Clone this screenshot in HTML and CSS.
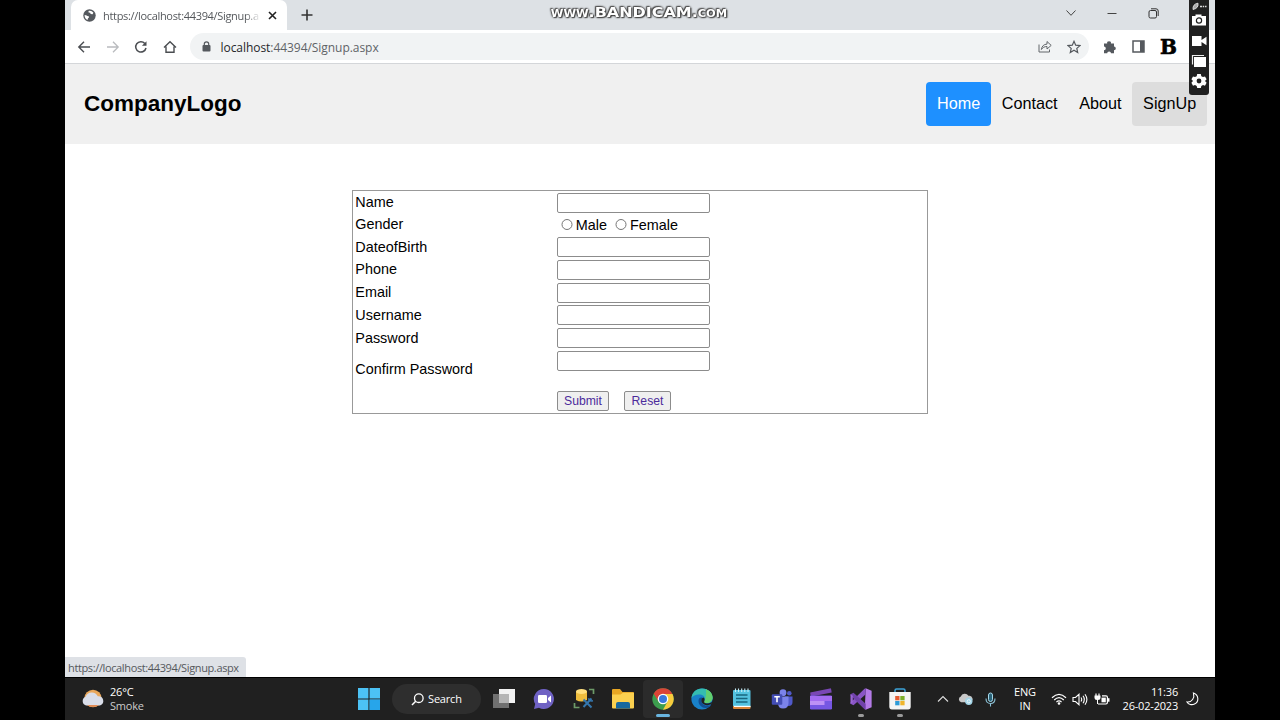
FILE: index.html
```html
<!DOCTYPE html>
<html>
<head>
    <meta charset="utf-8">
    <title>Signup</title>
    <link rel="stylesheet" href="styles.css">
</head>
<body>
<div class="screen">

    <!-- Tabs -->
    <div class="tab-bar">
        <div class="tab">
            <svg class="globe" width="13" height="13" viewBox="0 0 13 13"><circle cx="6.5" cy="6.5" r="6.2" fill="#55595e"/><path d="M1.6 6 C3.2 5.8 3.8 7.2 5.5 7.2 C6.8 7.8 5.6 8.8 5 9.3 L4.5 11 C2.8 10.2 1.5 8.6 1.6 6Z M5.5 2 C7.3 1.4 9.2 2 10.4 3.8 L9.6 5.2 L7.6 5 L7.2 3.8 L5.6 3.6Z" fill="#fff"/></svg>
            <span class="tab-title">https://localhost:44394/Signup.a</span>
            <svg class="tab-close" width="9" height="9" viewBox="0 0 9 9"><path d="M1 1 L8 8 M8 1 L1 8" stroke="#222" stroke-width="1.6"/></svg>
        </div>
        <svg class="new-tab" width="12" height="12" viewBox="0 0 12 12"><path d="M6 .5 V11.5 M.5 6 H11.5" stroke="#333" stroke-width="1.6"/></svg>
        <div class="window-buttons">
            <svg width="10" height="10" viewBox="0 0 10 10"><path d="M.5 2.5 L5 7.3 L9.5 2.5" fill="none" stroke="#444"/></svg>
            <svg width="10" height="10" viewBox="0 0 10 10"><path d="M.5 5.5 H9.5" stroke="#444"/></svg>
            <svg width="11" height="11" viewBox="0 0 11 11"><rect x="1" y="2.5" width="7.5" height="7.5" rx="1.5" fill="none" stroke="#333"/><path d="M3 .8 H8 Q10.2 .8 10.2 3 V8" fill="none" stroke="#333"/></svg>
        </div>
    </div>

    <!-- Toolbar -->
    <div class="toolbar">
        <div class="nav-buttons">
            <svg width="14" height="14" viewBox="0 0 14 14"><path d="M13 7 H1.8 M7 1.8 L1.8 7 L7 12.2" fill="none" stroke="#4a4d51" stroke-width="1.4"/></svg>
            <svg width="14" height="14" viewBox="0 0 14 14"><path d="M1 7 H12.2 M7 1.8 L12.2 7 L7 12.2" fill="none" stroke="#b9bbbe" stroke-width="1.3"/></svg>
            <svg width="14" height="14" viewBox="0 0 14 14"><path d="M12 8 A5.2 5.2 0 1 1 10.8 3.4" fill="none" stroke="#4a4d51" stroke-width="1.5"/><path d="M12.5 1.2 V5.8 H7.9Z" fill="#4a4d51"/></svg>
            <svg width="14" height="14" viewBox="0 0 14 14"><path d="M1 7.5 L7 1.8 L13 7.5 M3 6.4 V12.2 H11 V6.4" fill="none" stroke="#4a4d51" stroke-width="1.4"/></svg>
        </div>
        <div class="address">
            <svg width="9" height="11" viewBox="0 0 9 11"><rect x=".5" y="4" width="8" height="6.6" rx="1" fill="#55595e"/><path d="M2.3 4.5 V3 A2.2 2.2 0 0 1 6.7 3 V4.5" fill="none" stroke="#55595e" stroke-width="1.2"/></svg>
            <span class="url"><b>localhost</b>:44394/Signup.aspx</span>
            <svg class="share" width="14" height="13" viewBox="0 0 14 13"><path d="M1 4.5 V12 H11.5 V9.5" fill="none" stroke="#63676b"/><path d="M3.4 9.5 C3.8 6.2 5.8 4.2 9 4.1 V1.5 L13.2 5.4 L9 9 V6.5 C6.5 6.5 4.7 7.4 3.4 9.5Z" fill="none" stroke="#63676b"/></svg>
            <svg width="14" height="14" viewBox="0 0 14 14"><path d="M7 1.3 L8.7 5.2 L13 5.6 L9.8 8.4 L10.7 12.5 L7 10.3 L3.3 12.5 L4.2 8.4 L1 5.6 L5.3 5.2Z" fill="none" stroke="#55595e" stroke-width="1.2"/></svg>
        </div>
        <svg class="puzzle" width="14" height="14" viewBox="0 0 14 14"><path d="M1 3.5 H4.2 A1.9 1.9 0 1 1 7.9 3.5 H11 V6.6 A1.8 1.8 0 1 1 11 10.2 V13.3 H8 A1.9 1.9 0 0 0 4.2 13.3 H1 V10.2 A1.8 1.8 0 0 0 1 6.6Z" fill="#55595e"/></svg>
        <svg class="panel" width="13" height="13" viewBox="0 0 13 13"><rect x="1" y="1" width="11" height="11" fill="none" stroke="#55595e" stroke-width="1.5"/><rect x="8" y="1" width="4" height="11" fill="#55595e"/></svg>
        <span class="profile">B</span>
    </div>

    <!-- Page -->
    <div class="header">
        <span class="logo">CompanyLogo</span>
        <div class="header-right">
            <a class="active">Home</a>
            <a>Contact</a>
            <a>About</a>
            <a class="hover">SignUp</a>
        </div>
    </div>

    <div class="page">
        <form class="signup">
            <div class="row"><label>Name</label><input type="text"></div>
            <div class="row gender"><label>Gender</label>
                <span class="radios"><input type="radio" name="g">Male<input type="radio" name="g" class="second">Female</span>
            </div>
            <div class="row"><label>DateofBirth</label><input type="text"></div>
            <div class="row"><label>Phone</label><input type="text"></div>
            <div class="row"><label>Email</label><input type="text"></div>
            <div class="row"><label>Username</label><input type="text"></div>
            <div class="row"><label>Password</label><input type="password"></div>
            <div class="row confirm"><label>Confirm Password</label><input type="password"></div>
            <div class="row"><label></label><button type="button" class="submit">Submit</button><button type="button" class="reset">Reset</button></div>
        </form>
        <div class="status">https://localhost:44394/Signup.aspx</div>
    </div>

    <!-- Taskbar -->
    <div class="taskbar">
        <div class="weather">
            <svg width="24" height="22" viewBox="0 0 24 22"><circle cx="12" cy="10.5" r="8.7" fill="#e9a75a"/><path d="M5 17.5 A4.6 4.6 0 0 1 4.6 8.8 A6.6 6.6 0 0 1 16.8 8.2 A4.8 4.8 0 0 1 19 17.5Z" fill="#d9dde8"/><path d="M6 17 H18 Q12 21 6 17Z" fill="#e08a55"/></svg>
            <div>26°C<br><span>Smoke</span></div>
        </div>

        <div class="apps">
            <div class="app"><svg width="22" height="22" viewBox="0 0 22 22"><path d="M0 0 H10.4 V10.4 H0Z M11.6 0 H22 V10.4 H11.6Z M0 11.6 H10.4 V22 H0Z M11.6 11.6 H22 V22 H11.6Z" fill="#4cc2f5"/><path d="M11.6 11.6 H22 V22 H11.6Z" fill="#27a5ea"/></svg></div>
            <div class="search">
                <svg width="13" height="13" viewBox="0 0 13 13"><circle cx="7.8" cy="5.2" r="4.3" fill="none" stroke="#fff" stroke-width="1.3"/><path d="M4.7 8.3 L1 12" stroke="#fff" stroke-width="1.5"/></svg>
                Search
            </div>
            <!-- task view -->
            <div class="app"><svg width="22" height="22" viewBox="0 0 22 22"><rect x="6" y="1" width="16" height="14" fill="#f2f2f2"/><rect x="0" y="6" width="16" height="14" fill="#707070"/><rect x="6" y="6" width="10" height="9" fill="#b5b5b5"/></svg></div>
            <!-- chat -->
            <div class="app"><svg width="22" height="22" viewBox="0 0 22 22"><path d="M11 1 A10 10 0 1 1 6 19.7 L1 21 L2.2 16 A10 10 0 0 1 11 1Z" fill="#6f62c4"/><rect x="5" y="7" width="9" height="8" rx="1.3" fill="#fff"/><path d="M15 10 L18 7.6 V14.4 L15 12Z" fill="#fff"/></svg></div>
            <!-- database tools -->
            <div class="app"><svg width="22" height="22" viewBox="0 0 22 22"><path d="M3 3.5 V12 Q8.5 15 14 12 V3.5Z" fill="#eebd3d"/><ellipse cx="8.5" cy="3.5" rx="5.5" ry="2.5" fill="#ffdf7e"/><path d="M16 1.5 H20.5 V6 M1.5 15 V19.5 H6.5" fill="none" stroke="#6d9a68" stroke-width="1.7"/><path d="M10.5 11.5 L18.5 19.5 M18.5 10.5 L10.5 19" stroke="#3577ae" stroke-width="2"/><path d="M15.5 10.2 Q16.5 13.5 20 12.8" fill="none" stroke="#3577ae" stroke-width="1.5"/></svg></div>
            <!-- explorer -->
            <div class="app"><svg width="22" height="22" viewBox="0 0 22 22"><path d="M0 2 Q0 1 1 1 H8 L10.5 4 H21 Q22 4 22 5 V9 H0Z" fill="#e7a623"/><path d="M0 6.5 H8.5 L11 4.8 H22 V19.5 Q22 20.5 21 20.5 H1 Q0 20.5 0 19.5Z" fill="#fbd04f"/><path d="M4 20.5 V16 Q4 14 6 14 H16 Q18 14 18 16 V20.5Z" fill="#17689f"/></svg></div>
            <!-- chrome -->
            <div class="app open"><svg width="22" height="22" viewBox="0 0 22 22"><circle cx="11" cy="11" r="10.7" fill="#3c9d4e"/><path d="M11 11 L1.7 5.7 A10.7 10.7 0 0 1 20.3 5.7Z" fill="#db4437"/><path d="M11 6 H20.5 A10.7 10.7 0 0 1 11 21.7 L15.5 13.5Z" fill="#f8cb3d"/><path d="M1.7 5.7 L6.5 13.6 L11 6Z" fill="#db4437"/><circle cx="11" cy="11" r="5.3" fill="#fff"/><circle cx="11" cy="11" r="4" fill="#3978dc"/></svg></div>
            <!-- edge -->
            <div class="app"><svg width="22" height="22" viewBox="0 0 22 22"><circle cx="11" cy="11" r="10.6" fill="#1981c9"/><path d="M.5 10 C1.2 4 5.5 .4 11 .4 C17.5 .4 21.6 5 21.6 9.5 C21.6 13 19 15 15.8 15 C12.8 15 12.6 13.7 13.6 12.4 C14.6 9.5 12.5 7 9.3 6.6 C5.5 6.2 2 7.5 .5 10Z" fill="#35bdb0"/><path d="M15 1.3 C19 2.8 21.6 6 21.6 9.5 C21.6 13 19 15 15.8 15 C12.8 15 12.6 13.7 13.6 12.4 C15.5 8.5 15 4 15 1.3Z" fill="#62cf6e"/><path d="M7.7 11.5 C6.6 15.5 10 19.8 14.5 20 C17.2 20 19 18.8 20.3 16.7 C17 18.5 11.3 17.6 10.4 13.4 C10.2 11.6 11 10.6 11.6 10 C10 9 8.2 9.8 7.7 11.5Z" fill="#124f94"/><path d="M10.4 13.4 C10.1 11.5 11 9.6 12.6 9.4 C13.8 10.5 13.8 11.8 13.4 12.8 C12.4 14.6 13.8 15.4 16 15.4 C19 15.4 20.5 14.5 21.4 13.2 L20.6 16 C17 18 12 17.5 10.4 13.4Z" fill="#202020"/></svg></div>
            <!-- notepad -->
            <div class="app"><svg width="22" height="22" viewBox="0 0 22 22"><rect x="2" y="2" width="17.5" height="18" rx="1" fill="#54c2df"/><path d="M2 18 H19.5 V20 Q19.5 21 18.5 21 H3 Q2 21 2 20Z" fill="#d98437"/><path d="M3 17.8 H19.5 V19 H3Z" fill="#fff"/><path d="M5 7 H16.5 M5 10.5 H16.5 M5 14 H16.5" stroke="#17667f" stroke-width="1.3"/><path d="M4.5 .5 V4 M7.5 .5 V4 M10.7 .5 V4 M13.8 .5 V4 M17 .5 V4" stroke="#c6eef8" stroke-width="1.1"/></svg></div>
            <!-- teams -->
            <div class="app"><svg width="22" height="22" viewBox="0 0 22 22"><circle cx="12" cy="4.7" r="3.4" fill="#7b83eb"/><circle cx="18.3" cy="5.3" r="2.3" fill="#5059c9"/><path d="M14 8.5 H21.5 V14 Q21.5 18 17.5 18 H14Z" fill="#5059c9"/><path d="M7 8.5 H17.5 V15 Q17.5 20.5 12 20.5 Q7 20.5 7 15Z" fill="#7b83eb"/><rect x=".8" y="6.2" width="10.5" height="10.5" rx="1" fill="#434db5"/><path d="M3.3 8.8 H8.8 M6 8.8 V14.2" stroke="#fff" stroke-width="1.6"/></svg></div>
            <!-- clipchamp -->
            <div class="app"><svg width="22" height="22" viewBox="0 0 22 22"><path d="M.2 4.6 L19.8 .4 Q21 .2 21.2 1.4 L21.7 4.4 L1.5 8.4 L.6 8Z" fill="#7947b4"/><rect x="0" y="7.5" width="22" height="14" rx="1.2" fill="#7657e3"/><path d="M0 8 H22 V13 H0Z" fill="#a36cf0"/><path d="M0 13 H14.5 V17 H0Z" fill="#bd91f5"/></svg></div>
            <!-- visual studio -->
            <div class="app running"><svg width="22" height="22" viewBox="0 0 22 22"><path d="M15.7 .2 L21.6 2.8 V19.2 L15.7 21.8 L14.8 21Z" fill="#b47be7"/><path d="M15.7 .2 V6.3 L3.5 17.2 L.5 15.8 V14.5 L14.5 .8Z" fill="#8a55c6"/><path d="M15.7 21.8 V15.7 L3.5 4.8 L.5 6.2 V7.5 L14.5 21.2Z" fill="#7142ab"/><path d="M.5 6.2 L2.8 7.8 V14.2 L.5 15.8Z" fill="#9b66d6"/></svg></div>
            <!-- store -->
            <div class="app running"><svg width="22" height="22" viewBox="0 0 22 22"><path d="M6 5 V2.5 Q6 1 7.5 1 H14.5 Q16 1 16 2.5 V5" fill="none" stroke="#3ba2d8" stroke-width="1.5"/><path d="M.3 4 H21.7 V18.5 Q21.7 21.5 19.2 21.5 H2.8 Q.3 21.5 .3 18.5Z" fill="#f4f4f4"/><rect x="6.2" y="8" width="4.3" height="4.3" fill="#e45c33"/><rect x="11.3" y="8" width="4.3" height="4.3" fill="#7dae2a"/><rect x="6.2" y="13" width="4.3" height="4.3" fill="#2d9bd8"/><rect x="11.3" y="13" width="4.3" height="4.3" fill="#f0b52b"/></svg></div>
        </div>

        <div class="tray">
            <svg width="12" height="8" viewBox="0 0 12 8"><path d="M1 6.5 L6 1.5 L11 6.5" fill="none" stroke="#ddd" stroke-width="1.1"/></svg>
            <svg class="cloud" width="15" height="14" viewBox="0 0 15 14"><path d="M3.2 10.3 A3 3 0 0 1 2.8 4.6 A4.2 4.2 0 0 1 10.4 3.8 A3.3 3.3 0 0 1 12 10.3Z" fill="#c8c8c8"/><circle cx="10.8" cy="9.3" r="3.7" fill="#a4d5e8"/><circle cx="10.8" cy="9.3" r="1.6" fill="none" stroke="#e8f7fc"/></svg>
            <svg class="mic" width="11" height="15" viewBox="0 0 11 15"><rect x="3.5" y="1" width="4" height="8.5" rx="2" fill="#296277" stroke="#a5d8eb"/><path d="M1 6.5 Q1 11.5 5.5 11.5 Q10 11.5 10 6.5 M5.5 11.5 V14.5" fill="none" stroke="#8dc3d8" stroke-width="1.1"/></svg>
            <div class="lang">ENG<br>IN</div>
            <svg class="wifi" width="16" height="12" viewBox="0 0 16 12"><path d="M1 4.8 Q8 -2 15 4.8 M3.2 7 Q8 2.4 12.8 7 M5.4 9.1 Q8 6.7 10.6 9.1" fill="none" stroke="#fff" stroke-width="1.2"/><circle cx="8" cy="10.5" r="1.3" fill="#fff"/></svg>
            <svg class="sound" width="16" height="13" viewBox="0 0 16 13"><path d="M1 4.5 H3.5 L7 1.3 V11.7 L3.5 8.5 H1Z M9 4.5 Q10.4 6.5 9 8.5 M11 2.8 Q13.6 6.5 11 10.2 M13 1.2 Q16.8 6.5 13 11.8" fill="none" stroke="#fff" stroke-width="1.1"/></svg>
            <svg class="battery" width="16" height="13" viewBox="0 0 16 13"><path d="M2 .5 V3 M5 .5 V3" stroke="#fff" stroke-width="1.2"/><path d="M.5 2.5 H6.5 V5 Q6.5 7 4 7 V11 H3 V7 Q.5 7 .5 5Z" fill="#fff"/><path d="M8 2.8 H12 Q13.4 2.8 13.4 4.2 V9.6 Q13.4 11 12 11 H4" fill="none" stroke="#fff" stroke-width="1.2"/><rect x="7.5" y="4.6" width="4.3" height="4.7" fill="#fff"/><rect x="13.9" y="5.2" width="1.6" height="3.5" fill="#fff"/></svg>
            <div class="clock">11:36<br>26-02-2023</div>
            <svg class="moon" width="13" height="14" viewBox="0 0 13 14"><path d="M7.5 1 C13 3 13.2 9.8 8.5 12 C5.8 13.4 2.4 12.5 1 10 C6 10.5 8.8 6 7.5 1Z" fill="none" stroke="#fff" stroke-width="1.1"/></svg>
        </div>
    </div>

    <!-- Recorder overlay -->
    <div class="watermark">www.BANDICAM.com</div>
    <div class="recorder">
        <svg width="16" height="10" viewBox="0 0 16 10"><path d="M2 8.5 Q1.5 3 7 2.2 Q7.8 7.3 2 8.5Z" fill="#aaa" stroke="#eee" stroke-width=".8"/><path d="M9 5.5 H11 M11.7 5.5 H13.2 M14 5.5 H15.5" stroke="#ddd" stroke-width="1.3"/></svg>
        <svg class="camera" width="16" height="12" viewBox="0 0 16 12"><path d="M1 2 H4.5 V.5 H10.5 V2 H15 V11.5 H1Z" fill="#fff"/><circle cx="8" cy="6.5" r="2.6" fill="#fff" stroke="#222" stroke-width="1.2"/></svg>
        <svg class="video" width="16" height="12" viewBox="0 0 16 12"><path d="M1 1 H10.5 V5 L15.5 1.8 V10.2 L10.5 7 V11 H1Z" fill="#fff"/></svg>
        <svg class="stack" width="16" height="14" viewBox="0 0 16 14"><path d="M1.5 10.5 V1.5 H13" fill="none" stroke="#eee" stroke-width="1.2"/><rect x="3" y="3" width="12" height="10" fill="#fff"/></svg>
        <svg class="gear" width="16" height="16" viewBox="0 0 16 16"><path d="M6.2 1 H9.8 L10.3 3.2 L12 4.1 L14 3.4 L15.6 6.3 L14 8 L15.6 9.8 L14 12.7 L12 12 L10.3 12.9 L9.8 15 H6.2 L5.7 12.9 L4 12 L2 12.7 L.4 9.8 L2 8 L.4 6.3 L2 3.4 L4 4.1 L5.7 3.2Z" fill="#fff"/><circle cx="8" cy="8" r="2.4" fill="#222"/></svg>
    </div>
</div>
</body>
</html>
```
FILE: styles.css
```css
* {
    box-sizing: border-box;
}

body {
    margin: 0;
    background-color: #000;
    font-family: "Liberation Sans", Arial, sans-serif;
    overflow: hidden;
}

svg {
    display: block;
    flex-shrink: 0;
}

.screen {
    position: relative;
    display: flex;
    flex-direction: column;
    width: 1150px;
    height: 720px;
    margin: 0 auto;
    background-color: #fff;
    overflow: hidden;
}

/* Browser tabs */
.tab-bar {
    display: flex;
    align-items: center;
    height: 30px;
    background-color: #dde1e5;
}

.tab {
    display: flex;
    align-items: center;
    width: 216px;
    height: 30px;
    margin-left: 6px;
    padding-left: 12px;
    background-color: #fff;
    border-radius: 7px 7px 0 0;
}

.tab-title {
    width: 158px;
    margin-left: 7px;
    font-family: "Open Sans", sans-serif;
    font-size: 11px;
    letter-spacing: -0.32px;
    white-space: nowrap;
    overflow: hidden;
    color: #55585c;
    -webkit-mask-image: linear-gradient(to right, #000 90%, transparent 100%);
}

.tab-close {
    margin-left: 7px;
}

.new-tab {
    margin-left: 14px;
}

.window-buttons {
    display: flex;
    align-items: center;
    gap: 31px;
    margin: -4px 56px 0 auto;
}

/* Toolbar */
.toolbar {
    display: flex;
    align-items: center;
    height: 34px;
    padding-left: 12px;
    border-bottom: 1px solid #d4d6d9;
}

.nav-buttons {
    display: flex;
    gap: 14.7px;
    width: 113px;
}

.address {
    display: flex;
    align-items: center;
    width: 899px;
    height: 27px;
    padding: 0 8px 0 12px;
    border-radius: 14px;
    background-color: #f1f3f4;
}

.url {
    margin: 1px 0 0 9.5px;
    font-family: "Open Sans", sans-serif;
    font-size: 12px;
    letter-spacing: -0.05px;
    color: #5f6367;
}

.url b {
    font-weight: normal;
    color: #26282b;
}

.share {
    margin-left: auto;
    margin-right: 15px;
}

.puzzle {
    margin-left: 14px;
}

.panel {
    margin-left: 15px;
}

.profile {
    margin-left: 15px;
    font-family: "DejaVu Serif", serif;
    font-size: 20px;
    font-weight: bold;
    line-height: 20px;
    -webkit-text-stroke: 0.6px #000;
}

/* Site header */
.header {
    display: flex;
    justify-content: space-between;
    align-items: center;
    height: 80px;
    padding: 0 8px 0 19px;
    background-color: #f0f0f0;
}

.logo {
    font-size: 22.5px;
    font-weight: bold;
}

.header-right {
    display: flex;
}

.header-right a {
    padding: 0 10.8px 2px;
    font-size: 16.2px;
    line-height: 42px;
    border-radius: 4px;
    color: #000;
}

.header-right a.active {
    background-color: #1e90ff;
    color: #fff;
}

.header-right a.hover {
    background-color: #ddd;
}

/* Sign up form */
.page {
    position: relative;
    flex: 1;
    padding-top: 46px;
}

.signup {
    width: 576px;
    height: 224px;
    margin: 0 auto;
    padding-top: 0.5px;
    border: 1px solid #999;
    font-size: 14.4px;
}

.row {
    display: flex;
    align-items: center;
    height: 22.8px;
    padding-left: 2.3px;
}

.row label {
    width: 201.7px;
    padding-bottom: 1px;
}

.row.gender {
    height: 21.4px;
}

.row.confirm {
    height: 40px;
}

.row.confirm input {
    align-self: flex-start;
    margin-top: 1.4px;
}

input[type="text"],
input[type="password"] {
    width: 153px;
    height: 20px;
    border: 1px solid #8c8c8c;
    border-radius: 2px;
}

.radios {
    display: flex;
    align-items: center;
}

.radios input {
    width: 11.7px;
    height: 11.7px;
    margin: 0 3px 1px 4.2px;
}

.radios input.second {
    margin-left: 8.2px;
}

button {
    height: 20px;
    padding: 0;
    font-family: inherit;
    font-size: 12.2px;
    color: #4b2a9b;
    background-color: #efefef;
    border: 1px solid #8c8c8c;
    border-radius: 2px;
}

.submit {
    width: 52px;
}

.reset {
    width: 47px;
    margin-left: 15px;
}

/* Link preview at the bottom of the window */
.status {
    position: absolute;
    left: 0;
    bottom: 0;
    width: 181px;
    height: 20px;
    padding-left: 3px;
    font-family: "Open Sans", sans-serif;
    font-size: 11px;
    line-height: 21px;
    letter-spacing: -0.37px;
    white-space: nowrap;
    color: #55585c;
    background-color: #dee1e6;
    border-radius: 0 3px 0 0;
}

/* Taskbar */
.taskbar {
    display: flex;
    align-items: center;
    height: 43px;
    border-top: 1px solid #000;
    background-color: #202020;
    font-family: "Open Sans", sans-serif;
    font-size: 11px;
    line-height: 14px;
    letter-spacing: -0.2px;
    color: #fff;
}

.weather {
    display: flex;
    align-items: center;
    gap: 5px;
    width: 284px;
    padding-left: 16px;
}

.weather span {
    color: #ccc;
}

.apps {
    display: flex;
    align-items: center;
}

.app {
    position: relative;
    display: flex;
    align-items: center;
    justify-content: center;
    width: 39.6px;
    height: 38px;
}

.app.open {
    background-color: #2b2b2b;
    border-radius: 4px;
}

.app.open::after,
.app.running::after {
    content: "";
    position: absolute;
    bottom: 1px;
    width: 6px;
    height: 3px;
    border-radius: 2px;
    background-color: #9a9a9a;
}

.app.open::after {
    width: 14px;
    background-color: #69b5e0;
}

.search {
    display: flex;
    align-items: center;
    justify-content: center;
    gap: 4px;
    width: 89px;
    height: 30px;
    margin: 0 3.7px 0 3.3px;
    border-radius: 15px;
    background-color: #2e2e2e;
}

.tray {
    display: flex;
    align-items: center;
    margin-left: auto;
    padding-right: 16px;
}

.cloud {
    margin-left: 9px;
}

.mic {
    margin-left: 12px;
}

.lang {
    width: 24px;
    margin-left: 17px;
    text-align: center;
}

.wifi {
    margin-left: 14px;
}

.sound {
    margin-left: 5px;
}

.battery {
    margin-left: 6px;
}

.clock {
    width: 60px;
    margin-left: 8px;
    text-align: right;
}

.moon {
    margin-left: 8px;
}

/* Screen recorder */
.watermark {
    position: absolute;
    top: 4px;
    left: 485px;
    width: 178px;
    font-family: "DejaVu Sans", sans-serif;
    font-size: 14px;
    font-weight: bold;
    font-variant: small-caps;
    line-height: 17px;
    text-align: center;
    white-space: nowrap;
    color: #fff;
    text-shadow: 0 0 2px #333, 0 0 2px #333, 1px 1px 1px #555, -1px -1px 1px #666;
    transform: scaleX(1.14);
}

.recorder {
    position: absolute;
    top: 0;
    left: 1124px;
    display: flex;
    flex-direction: column;
    align-items: center;
    width: 20px;
    height: 95px;
    padding-top: 1px;
    border-radius: 0 0 3px 3px;
    background-color: #202020;
}

.recorder .camera {
    margin-top: 3px;
}

.recorder .video {
    margin-top: 9px;
}

.recorder .stack {
    margin-top: 7px;
}

.recorder .gear {
    margin-top: 5px;
}
```
